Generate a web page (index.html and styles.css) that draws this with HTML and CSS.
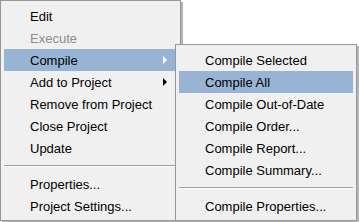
FILE: index.html
```html
<!DOCTYPE html>
<html>
<head>
<meta charset="utf-8">
<link rel="stylesheet" href="styles.css">
</head>
<body>
<div class="desk">
  <div class="menu main">
    <div class="item">Edit</div>
    <div class="item disabled">Execute</div>
    <div class="item active">Compile<span class="arrow white"></span></div>
    <div class="item">Add to Project<span class="arrow"></span></div>
    <div class="item">Remove from Project</div>
    <div class="item">Close Project</div>
    <div class="item">Update</div>
    <div class="sep"></div>
    <div class="item">Properties...</div>
    <div class="item">Project Settings...</div>
  </div>
  <div class="menu sub">
    <div class="item">Compile Selected</div>
    <div class="item active">Compile All</div>
    <div class="item">Compile Out-of-Date</div>
    <div class="item">Compile Order...</div>
    <div class="item">Compile Report...</div>
    <div class="item">Compile Summary...</div>
    <div class="sep"></div>
    <div class="item">Compile Properties...</div>
  </div>
</div>
</body>
</html>
```
FILE: styles.css
```css
html, body {
  margin: 0;
  padding: 0;
  background: #ffffff;
}
.desk {
  position: relative;
  width: 359px;
  height: 222px;
  overflow: hidden;
  font-family: "Liberation Sans", Arial, sans-serif;
  font-size: 13px;
  color: #000;
}
.menu {
  position: absolute;
  box-sizing: border-box;
  background: #f0f0f0;
  border: 1px solid #979797;
  padding: 4px 3px 3px 3px;
  box-shadow: 2px 2px 0 #b4b4b4;
}
.main {
  left: 0;
  top: 0;
  width: 181px;
}
.sub {
  left: 175px;
  top: 44px;
  width: 182px;
}
.item {
  position: relative;
  height: 22px;
  line-height: 23px;
  padding-left: 26px;
  white-space: nowrap;
}
.item.active {
  background: #98b4d4;
}
.item.disabled {
  color: #8d8d8d;
}
.sep {
  height: 1px;
  margin: 6px 0 6px 0;
  border-top: 1px solid #a0a0a0;
  background: #ffffff;
}
.arrow {
  position: absolute;
  right: 10px;
  top: 7px;
  width: 0;
  height: 0;
  border-top: 4px solid transparent;
  border-bottom: 4px solid transparent;
  border-left: 4px solid #000;
}
.arrow.white {
  border-left-color: #ffffff;
}
```
